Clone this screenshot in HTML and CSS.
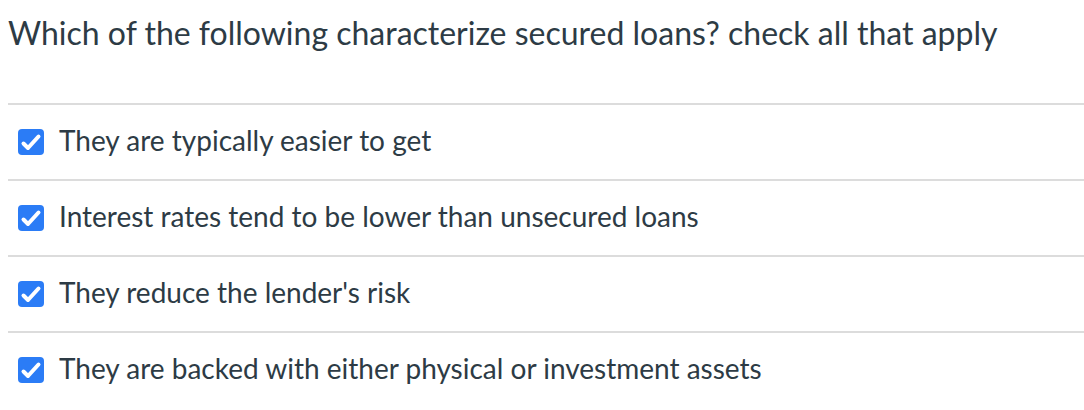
FILE: index.html
```html
<!DOCTYPE html>
<html>
<head>
<meta charset="utf-8">
<link rel="stylesheet" href="styles.css">
</head>
<body>
<div class="question">
  <h1 class="q-title">Which of the following characterize secured loans? check all that apply</h1>
  <ul class="answers">
    <li class="answer"><span class="box"><svg viewBox="0 0 26 26" width="26" height="26"><path d="M5.5 14.5l4.5 4.5L20.5 7.5" fill="none" stroke="#fff" stroke-width="4" stroke-linecap="round" stroke-linejoin="round"/></svg></span><span class="label">They are typically easier to get</span></li>
    <li class="answer"><span class="box"><svg viewBox="0 0 26 26" width="26" height="26"><path d="M5.5 14.5l4.5 4.5L20.5 7.5" fill="none" stroke="#fff" stroke-width="4" stroke-linecap="round" stroke-linejoin="round"/></svg></span><span class="label">Interest rates tend to be lower than unsecured loans</span></li>
    <li class="answer"><span class="box"><svg viewBox="0 0 26 26" width="26" height="26"><path d="M5.5 14.5l4.5 4.5L20.5 7.5" fill="none" stroke="#fff" stroke-width="4" stroke-linecap="round" stroke-linejoin="round"/></svg></span><span class="label">They reduce the lender's risk</span></li>
    <li class="answer"><span class="box"><svg viewBox="0 0 26 26" width="26" height="26"><path d="M5.5 14.5l4.5 4.5L20.5 7.5" fill="none" stroke="#fff" stroke-width="4" stroke-linecap="round" stroke-linejoin="round"/></svg></span><span class="label">They are backed with either physical or investment assets</span></li>
  </ul>
</div>
</body>
</html>
```
FILE: styles.css
```css
html, body { margin: 0; padding: 0; background: #fff; }
body { font-family: Lato, "Noto Sans", sans-serif; color: #2d3b45; }
.question { padding: 0 0 0 8px; }
.q-title {
  margin: 0;
  padding-top: 13px;
  font-size: 32px;
  font-weight: 400;
  line-height: 40px;
  height: 90px;
  border-bottom: 2px solid #dcdcdc;
}
.answers { list-style: none; margin: 0; padding: 0; }
.answer {
  display: flex;
  align-items: center;
  height: 74px;
  border-bottom: 2px solid #dcdcdc;
  padding-left: 10px;
}
.answer:last-child { border-bottom: none; }
.box {
  width: 26px; height: 26px;
  border-radius: 4px;
  background: #2b7cf6;
  display: flex; align-items: center; justify-content: center;
  margin-right: 15px;
  flex: none;
}
.box svg { display: block; }
.label { font-size: 28px; line-height: 32px; margin-top: -4px; }
```
